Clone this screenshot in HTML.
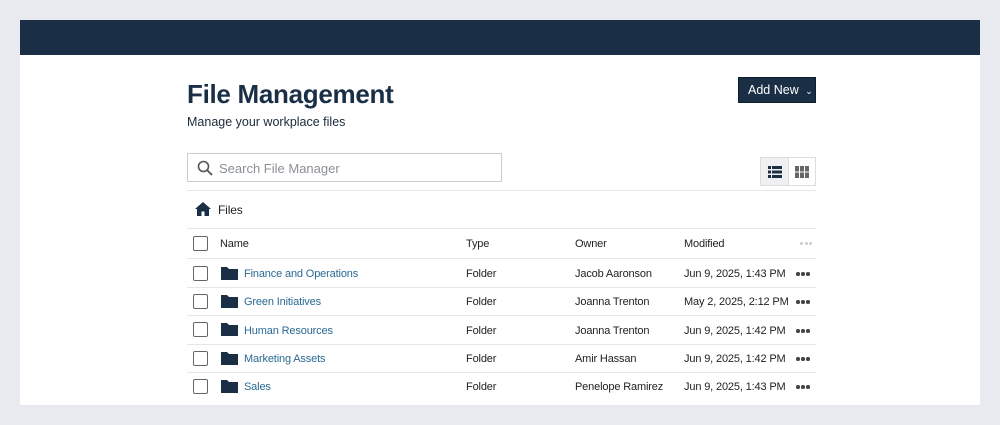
<!DOCTYPE html>
<html><head><style>
*{margin:0;padding:0;box-sizing:border-box}
body{width:1000px;height:425px;background:#e9eaef;font-family:"Liberation Sans",sans-serif;position:relative;overflow:hidden;color:#1b2a3a}
.card{position:absolute;left:20px;top:20px;width:960px;height:385px;background:#fff}
.bar{position:absolute;left:0;top:0;width:960px;height:35px;background:#1a2f45}
.a{position:absolute}
h1{position:absolute;left:187px;top:79px;font-size:26px;font-weight:bold;color:#1a2f45;letter-spacing:-0.3px}
.sub{left:187px;top:115px;font-size:12.5px}
.btn{left:738px;top:77px;width:78px;height:26px;background:#1a2f45;color:#fff;font-size:12.5px;line-height:25px;padding-left:9px;border:1px solid #0f1e2e}
.search{left:187px;top:153px;width:315px;height:29px;border:1px solid #ccc;}
.search span{position:absolute;left:31px;top:7px;font-size:13px;color:#8a8f96}
.tog{left:760px;top:157px;width:56px;height:29px;border:1px solid #ddd}
.hl{position:absolute;left:187px;width:629px;height:1px;background:#e6e6e6}
.t{position:absolute;font-size:11px;color:#222;letter-spacing:-0.15px}
.cb{position:absolute;left:193px;width:15px;height:15px;border:1.5px solid #666;border-radius:2px}
.lnk{color:#2a6a94}
.dots{position:absolute;left:796px;width:20px;height:4px;display:flex;gap:1.5px}
.dots i{display:block;width:3.5px;height:3.5px;border-radius:50%;background:#444}
</style></head><body>
<div class="card"><div class="bar"></div></div>
<h1>File Management</h1>
<div class="a sub">Manage your workplace files</div>
<div class="a btn">Add New <span style="font-size:9px;margin-left:3px">&#8964;</span></div>
<div class="a search">
<svg style="position:absolute;left:9px;top:6px" width="16" height="16" viewBox="0 0 16 16"><circle cx="6.5" cy="6.5" r="5" fill="none" stroke="#555" stroke-width="1.6"/><path d="M10.2 10.2L15 15" stroke="#555" stroke-width="1.8"/></svg>
<span>Search File Manager</span></div>
<div class="a tog"><div style="position:absolute;left:0;top:0;width:28px;height:27px;background:#eef0f2;border-right:1px solid #ddd"></div>
<svg style="position:absolute;left:7px;top:8px" width="14" height="12" viewBox="0 0 14 12" fill="#1a2f45"><rect x="0" y="0" width="3" height="3"/><rect x="4" y="0" width="10" height="3"/><rect x="0" y="4.5" width="3" height="3"/><rect x="4" y="4.5" width="10" height="3"/><rect x="0" y="9" width="3" height="3"/><rect x="4" y="9" width="10" height="3"/></svg>
<svg style="position:absolute;left:34px;top:8px" width="14" height="12" viewBox="0 0 14 12" fill="#666"><rect x="0" y="0" width="4" height="5.5"/><rect x="5" y="0" width="4" height="5.5"/><rect x="10" y="0" width="4" height="5.5"/><rect x="0" y="6.5" width="4" height="5.5"/><rect x="5" y="6.5" width="4" height="5.5"/><rect x="10" y="6.5" width="4" height="5.5"/></svg></div>
<div class="hl" style="top:190px"></div>
<svg class="a" style="left:195px;top:202px" width="16" height="14" viewBox="0 0 16 14"><path d="M8 0L0 7h2v7h4.5V9.5h3V14H14V7h2z" fill="#1a2f45"/></svg>
<div class="t" style="left:218px;top:203px;font-size:12px">Files</div>
<div class="hl" style="top:228px"></div>
<div class="cb" style="top:236px"></div>
<div class="t" style="left:220px;top:238px">Name</div>
<div class="t" style="left:466px;top:238px">Type</div>
<div class="t" style="left:575px;top:238px">Owner</div>
<div class="t" style="left:684px;top:238px">Modified</div>
<div class="dots" style="top:242px;left:800px"><i style="background:#ccc;width:3px;height:3px"></i><i style="background:#ccc;width:3px;height:3px"></i><i style="background:#ccc;width:3px;height:3px"></i></div>
<div class="hl" style="top:258px"></div>

<div class="cb" style="top:266px"></div><svg class="a" style="left:221px;top:266px" width="17" height="14" viewBox="0 0 17 14"><path d="M0 1h6l2 2h9v11H0z" fill="#1a2f45"/></svg>
<div class="t lnk" style="left:244px;top:268px">Finance and Operations</div><div class="t" style="left:466px;top:268px">Folder</div><div class="t" style="left:575px;top:268px">Jacob Aaronson</div><div class="t" style="left:684px;top:268px">Jun 9, 2025, 1:43 PM</div><div class="dots" style="top:272px"><i></i><i></i><i></i></div>
<div class="hl" style="top:287px"></div>
<div class="cb" style="top:294px"></div><svg class="a" style="left:221px;top:294px" width="17" height="14" viewBox="0 0 17 14"><path d="M0 1h6l2 2h9v11H0z" fill="#1a2f45"/></svg>
<div class="t lnk" style="left:244px;top:296px">Green Initiatives</div><div class="t" style="left:466px;top:296px">Folder</div><div class="t" style="left:575px;top:296px">Joanna Trenton</div><div class="t" style="left:684px;top:296px">May 2, 2025, 2:12 PM</div><div class="dots" style="top:300px"><i></i><i></i><i></i></div>
<div class="hl" style="top:315px"></div>
<div class="cb" style="top:322px"></div><svg class="a" style="left:221px;top:322px" width="17" height="14" viewBox="0 0 17 14"><path d="M0 1h6l2 2h9v11H0z" fill="#1a2f45"/></svg>
<div class="t lnk" style="left:244px;top:325px">Human Resources</div><div class="t" style="left:466px;top:325px">Folder</div><div class="t" style="left:575px;top:325px">Joanna Trenton</div><div class="t" style="left:684px;top:325px">Jun 9, 2025, 1:42 PM</div><div class="dots" style="top:329px"><i></i><i></i><i></i></div>
<div class="hl" style="top:344px"></div>
<div class="cb" style="top:351px"></div><svg class="a" style="left:221px;top:351px" width="17" height="14" viewBox="0 0 17 14"><path d="M0 1h6l2 2h9v11H0z" fill="#1a2f45"/></svg>
<div class="t lnk" style="left:244px;top:353px">Marketing Assets</div><div class="t" style="left:466px;top:353px">Folder</div><div class="t" style="left:575px;top:353px">Amir Hassan</div><div class="t" style="left:684px;top:353px">Jun 9, 2025, 1:42 PM</div><div class="dots" style="top:357px"><i></i><i></i><i></i></div>
<div class="hl" style="top:372px"></div>
<div class="cb" style="top:379px"></div><svg class="a" style="left:221px;top:379px" width="17" height="14" viewBox="0 0 17 14"><path d="M0 1h6l2 2h9v11H0z" fill="#1a2f45"/></svg>
<div class="t lnk" style="left:244px;top:381px">Sales</div><div class="t" style="left:466px;top:381px">Folder</div><div class="t" style="left:575px;top:381px">Penelope Ramirez</div><div class="t" style="left:684px;top:381px">Jun 9, 2025, 1:43 PM</div><div class="dots" style="top:385px"><i></i><i></i><i></i></div>
</body></html>
